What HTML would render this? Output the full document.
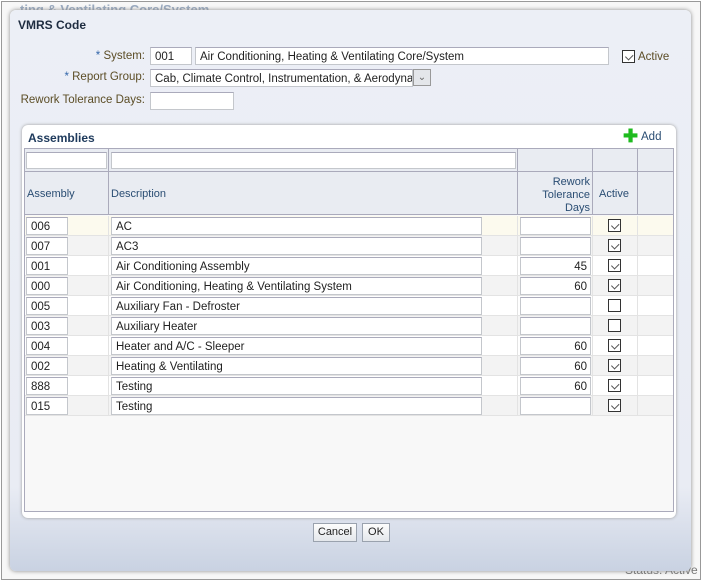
<!DOCTYPE html><html><head><style>
*{box-sizing:border-box;margin:0;padding:0}
body{width:702px;height:581px;background:#fff;font-family:"Liberation Sans",sans-serif;font-size:11px;color:#333;position:relative;overflow:hidden}
.a{position:absolute}
.frame{left:1px;top:1px;width:700px;height:579px;border:1px solid #999;background:#f7f7f7}
.dlg{left:10px;top:10px;width:681px;height:561px;border-radius:6px;background:linear-gradient(#eceff6 0,#e9ecf4 85%,#c9d2e2 100%);box-shadow:0 0 4px #888}
.lbl{color:#5c4d26;text-align:right;font-size:11.5px}
.req{color:#3366aa}
.in{background:#fff;border:1px solid #c4c7cc;border-top-color:#aab;height:18px;font-size:11.5px;padding:2px 4px 0;line-height:15px;color:#222}
.cb{width:13px;height:13px;border:1px solid #333;background:#fff}
.cb.c::after{content:"";position:absolute;width:6px;height:4px;border-left:1.3px solid #555;border-bottom:1.3px solid #555;transform:rotate(-45deg);transform-origin:0 0;top:6px;left:2px}
.panel{left:22px;top:125px;width:654px;height:393px;background:#fff;border-radius:6px;box-shadow:0 0 3px #999}
.th{background:#e9ecf2;border-right:1px solid #aab;border-bottom:1px solid #aab;color:#2a4d73;font-size:11px}
.row{left:25px;width:648px;height:20px;border-bottom:1px solid #e3e3e3}
.btn{background:linear-gradient(#fdfdfd,#e4e7ec);border:1px solid #9aa2ae;font-size:11px;color:#222;text-align:center;line-height:17px;height:19px}
</style></head><body>
<div class="a frame"></div>
<div class="a" style="left:20px;top:2px;font-weight:bold;color:#9aaac0;font-size:13px">ting &amp; Ventilating Core/System</div>
<div class="a" style="left:625px;top:563px;color:#777;font-size:12px">Status: Active</div>
<div class="a dlg"></div>
<div class="a" style="left:18px;top:18px;font-weight:bold;font-size:12px;color:#1e2c40">VMRS Code</div>
<div class="a lbl" style="left:40px;top:50px;width:105px"><span class="req">*</span> System:</div>
<div class="a in" style="left:150px;top:47px;width:42px">001</div>
<div class="a in" style="left:195px;top:47px;width:414px">Air Conditioning, Heating &amp; Ventilating Core/System</div>
<div class="a cb c" style="left:622px;top:50px"></div>
<div class="a lbl" style="left:638px;top:51px;text-align:left">Active</div>
<div class="a lbl" style="left:20px;top:71px;width:125px"><span class="req">*</span> Report Group:</div>
<div class="a in" style="left:150px;top:69px;width:263px;overflow:hidden;white-space:nowrap">Cab, Climate Control, Instrumentation, &amp; Aerodynam</div>
<div class="a" style="left:413px;top:69px;width:18px;height:17px;border:1px solid #999;background:#e4e6ea;color:#666;text-align:center;font-size:10px;line-height:15px">&#8964;</div>
<div class="a lbl" style="left:10px;top:94px;width:135px">Rework Tolerance Days:</div>
<div class="a in" style="left:150px;top:92px;width:84px"></div>
<div class="a panel"></div>
<div class="a" style="left:28px;top:131px;font-weight:bold;font-size:12px;color:#1e3a5c">Assemblies</div>
<div class="a" style="left:623px;top:129px;color:#1fbb1f;font-size:18px;font-weight:bold;line-height:15px">&#10010;</div>
<div class="a" style="left:641px;top:131px;color:#2a4d73;font-size:11.5px">Add</div>
<div class="a" style="left:24px;top:148px;width:650px;height:364px;border:1px solid #aab;background:#f8f8f8"></div>
<div class="a th" style="left:25px;top:149px;width:84px;height:23px"></div>
<div class="a th" style="left:109px;top:149px;width:409px;height:23px"></div>
<div class="a th" style="left:518px;top:149px;width:75px;height:23px"></div>
<div class="a th" style="left:593px;top:149px;width:45px;height:23px"></div>
<div class="a th" style="left:638px;top:149px;width:35px;height:23px;border-right:0"></div>
<div class="a in" style="left:26px;top:152px;width:81px;height:17px"></div>
<div class="a in" style="left:111px;top:152px;width:405px;height:17px"></div>
<div class="a th" style="left:25px;top:172px;width:84px;height:43px;padding:16px 0 0 2px">Assembly</div>
<div class="a th" style="left:109px;top:172px;width:409px;height:43px;padding:16px 0 0 2px">Description</div>
<div class="a th" style="left:518px;top:172px;width:75px;height:43px;text-align:right;padding:4px 2px 0 0;line-height:13px">Rework<br>Tolerance<br>Days</div>
<div class="a th" style="left:593px;top:172px;width:45px;height:43px;padding:16px 0 0 6px">Active</div>
<div class="a th" style="left:638px;top:172px;width:35px;height:43px;border-right:0"></div>
<div id="rows"></div>
<div class="a btn" style="left:313px;top:523px;width:44px">Cancel</div>
<div class="a btn" style="left:362px;top:523px;width:28px">OK</div>
<script>
var d=[["006","AC","",1],["007","AC3","",1],["001","Air Conditioning Assembly","45",1],["000","Air Conditioning, Heating &amp; Ventilating System","60",1],["005","Auxiliary Fan - Defroster","",0],["003","Auxiliary Heater","",0],["004","Heater and A/C - Sleeper","60",1],["002","Heating &amp; Ventilating","60",1],["888","Testing","60",1],["015","Testing","",1]];
var h="";d.forEach(function(r,i){var y=216+i*20;var bg=i==0?"#fcfaee":(i%2?"#f3f3f3":"#fff");
h+='<div class="a row" style="top:'+y+'px;background:'+bg+'"></div>';
h+='<div class="a" style="left:108px;top:'+y+'px;width:1px;height:20px;background:#e3e3e3"></div><div class="a" style="left:517px;top:'+y+'px;width:1px;height:20px;background:#e3e3e3"></div><div class="a" style="left:592px;top:'+y+'px;width:1px;height:20px;background:#e3e3e3"></div><div class="a" style="left:637px;top:'+y+'px;width:1px;height:20px;background:#e3e3e3"></div>';
h+='<div class="a in" style="left:26px;top:'+(y+1)+'px;width:42px">'+r[0]+'</div>';
h+='<div class="a in" style="left:111px;top:'+(y+1)+'px;width:371px">'+r[1]+'</div>';
h+='<div class="a in" style="left:520px;top:'+(y+1)+'px;width:71px;text-align:right;padding-right:3px">'+r[2]+'</div>';
h+='<div class="a cb'+(r[3]?' c':'')+'" style="left:608px;top:'+(y+3)+'px"></div>';});
document.getElementById("rows").outerHTML=h;
</script>
</body></html>
